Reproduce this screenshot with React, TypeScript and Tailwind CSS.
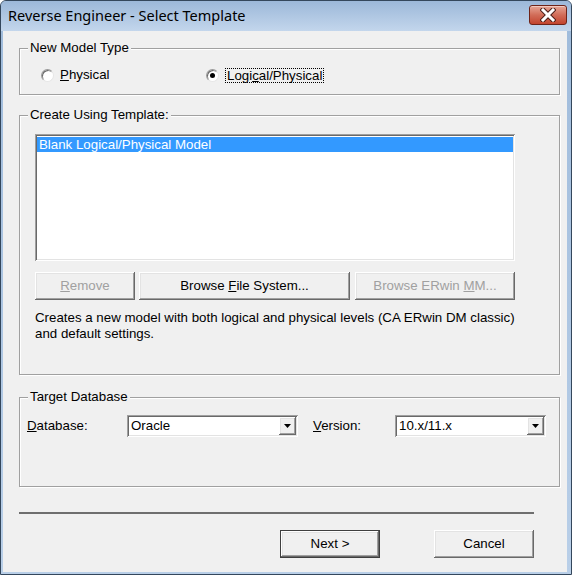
const raised =
  "shadow-[inset_-1px_-1px_#696969,inset_1px_1px_#ffffff,inset_-2px_-2px_#a0a0a0,inset_2px_2px_#e3e3e3]";
const sunken =
  "shadow-[inset_1px_1px_#a0a0a0,inset_-1px_-1px_#ffffff,inset_2px_2px_#696969,inset_-2px_-2px_#e3e3e3]";

function Radio({ checked }: { checked?: boolean }) {
  return (
    <span className="w-[13px] h-[13px] rounded-full bg-white border border-t-[#9a9a9a] border-l-[#9a9a9a] border-b-[#e6e6e6] border-r-[#e6e6e6] shadow-[inset_1px_1px_#6a6a6a] flex items-center justify-center">
      {checked && <span className="w-[5px] h-[5px] rounded-full bg-black" />}
    </span>
  );
}

function Combo({ value, width }: { value: string; width: string }) {
  return (
    <div className={`${width} h-[22px] bg-white ${sunken} flex items-center pl-[4px] pr-[2px]`}>
      <span className="flex-1">{value}</span>
      <span className={`w-[17px] h-[18px] bg-[#f0f0f0] ${raised} flex items-center justify-center`}>
        <svg width="8" height="4" viewBox="0 0 8 4">
          <path d="M0 0H7L3.5 4Z" fill="#000" />
        </svg>
      </span>
    </div>
  );
}

function Button({
  children,
  width,
  disabled,
  isDefault,
}: {
  children: React.ReactNode;
  width: string;
  disabled?: boolean;
  isDefault?: boolean;
}) {
  return (
    <button
      className={`${width} h-[28px] bg-[#f0f0f0] ${raised} ${isDefault ? "border border-[#3f3f3f]" : ""} ${
        disabled ? "text-[#a0a0a0]" : "text-black"
      } flex items-center justify-center`}
    >
      <span>{children}</span>
    </button>
  );
}

export default function App() {
  return (
    <div className="w-[572px] h-[575px] rounded-t-[6px] border border-[#34475c] bg-gradient-to-b from-[#9fbbdb] to-[#b9cfe8] flex flex-col font-['Liberation_Sans',Arial,sans-serif] text-[13.3px] text-black overflow-hidden">
      {/* Title bar */}
      <div className="h-[30px] flex items-center pl-[7px] pr-[4px] bg-gradient-to-b from-[#9cb8d9] to-[#c3d6ec]">
        <span className="flex-1 font-['Noto_Sans',sans-serif] text-[14.5px] text-black">
          Reverse Engineer - Select Template
        </span>
        <span className="w-[38px] h-[20px] mb-[3px] rounded-[3px] border border-[#6e2318] bg-gradient-to-b from-[#e5a595] via-[#d16c58] to-[#c2432d] shadow-[inset_0_1px_#f2c9bf] flex items-center justify-center">
          <svg width="16" height="14" viewBox="0 0 16 14">
            <path d="M3 2L13 12M13 2L3 12" stroke="#4a1e18" strokeWidth="5" strokeLinecap="square" />
            <path d="M3 2L13 12M13 2L3 12" stroke="#ffffff" strokeWidth="3" strokeLinecap="square" />
          </svg>
        </span>
      </div>

      {/* Client area */}
      <div className="flex-1 ml-[2px] mr-[4px] mb-[2px] bg-[#f0f0f0] pl-[16px] flex flex-col">
        {/* New Model Type */}
        <fieldset className="mt-[9px] w-[541px] border border-[#a0a0a0] shadow-[inset_1px_1px_#ffffff,1px_1px_#ffffff]">
          <legend className="ml-[8px] px-[2px] leading-[16px] bg-[#f0f0f0]">New Model Type</legend>
          <div className="h-[38px] flex items-center pl-[21px]">
            <div className="w-[165px] flex items-center gap-[6px]">
              <Radio />
              <span>
                <span className="underline">P</span>hysical
              </span>
            </div>
            <div className="flex items-center gap-[6px]">
              <Radio checked />
              <span className="border border-dotted border-black px-[1px] leading-[13px]">
                Logi<span className="underline">c</span>al/Physical
              </span>
            </div>
          </div>
        </fieldset>

        {/* Create Using Template */}
        <fieldset className="mt-[12px] w-[541px] border border-[#a0a0a0] shadow-[inset_1px_1px_#ffffff,1px_1px_#ffffff]">
          <legend className="ml-[8px] px-[2px] leading-[16px] bg-[#f0f0f0]">Create Using Template:</legend>
          <div className="h-[251px] pl-[15px] pt-[11px] flex flex-col">
            <div className={`w-[480px] h-[127px] bg-white ${sunken} p-[2px] pt-[3px]`}>
              <div className="h-[15px] bg-[#3399ff] text-white leading-[15px] pl-[2px]">
                Blank Logical/Physical Model
              </div>
            </div>
            <div className="mt-[11px] flex">
              <Button width="w-[100px]" disabled>
                <span className="underline">R</span>emove
              </Button>
              <div className="ml-[4px]">
                <Button width="w-[211px]">
                  Browse <span className="underline">F</span>ile System...
                </Button>
              </div>
              <div className="ml-[5px]">
                <Button width="w-[160px]" disabled>
                  Browse ERwin <span className="underline">M</span>M...
                </Button>
              </div>
            </div>
            <p className="mt-[10px] leading-[16px]">
              Creates a new model with both logical and physical levels (CA ERwin DM classic)
              <br />
              and default settings.
            </p>
          </div>
        </fieldset>

        {/* Target Database */}
        <fieldset className="mt-[14px] w-[541px] border border-[#a0a0a0] shadow-[inset_1px_1px_#ffffff,1px_1px_#ffffff]">
          <legend className="ml-[8px] px-[2px] leading-[16px] bg-[#f0f0f0]">Target Database</legend>
          <div className="h-[81px] pl-[7px] pt-[10px]">
            <div className="flex items-center">
              <span className="w-[100px]">
                <span className="underline">D</span>atabase:
              </span>
              <Combo value="Oracle" width="w-[171px]" />
              <span className="ml-[15px] w-[82px]">
                <span className="underline">V</span>ersion:
              </span>
              <Combo value="10.x/11.x" width="w-[151px]" />
            </div>
          </div>
        </fieldset>

        {/* Separator */}
        <div className="mt-[25px] w-[515px] h-[2px] bg-[#6e6e6e]" />

        {/* Footer buttons */}
        <div className="mt-[16px] w-[515px] flex justify-end gap-[54px]">
          <Button width="w-[100px]" isDefault>
            Next &gt;
          </Button>
          <Button width="w-[100px]">Cancel</Button>
        </div>
      </div>
    </div>
  );
}
